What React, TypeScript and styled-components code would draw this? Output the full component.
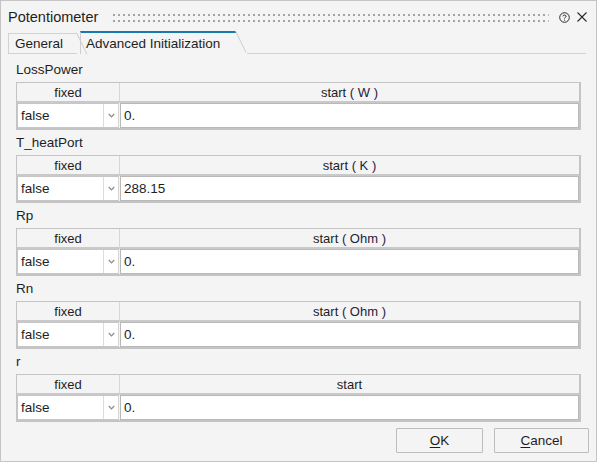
import React from 'react'
import styled, { createGlobalStyle } from 'styled-components'

const GlobalStyle = createGlobalStyle`
    html, body {
        margin: 0;
        padding: 0;
        background: #f4f4f4;
    }
    body {
        font-family: "Liberation Sans", Arial, sans-serif;
        font-size: 13px;
        color: #1e1e1e;
    }
    * {
        box-sizing: border-box;
    }
`

const Window = styled.div`
    display: flex;
    flex-direction: column;
    width: 597px;
    height: 462px;
    border: 1px solid #c4c4c4;
    background: #f4f4f4;
    overflow: hidden;

    & > * {
        flex-shrink: 0;
    }
`

const TitleBar = styled.div`
    display: flex;
    align-items: center;
    height: 30px;
    padding: 2px 9px 0 7px;
`

const Title = styled.span`
    font-size: 14.5px;
    color: #1f1f1f;
`

const Grip = styled.svg`
    flex: 1;
    height: 8px;
    margin: 1px 10px 0 15px;
`

const TitleIcons = styled.div`
    display: flex;
    align-items: center;
    gap: 7px;
`

const TabBar = styled.div`
    display: flex;
    align-items: flex-end;
    height: 23px;
    padding-left: 7px;
    padding-right: 10px;
`

const Tab = styled.div<{ $active?: boolean }>`
    position: relative;
    height: ${p => (p.$active ? 23 : 21)}px;
    padding: ${p => (p.$active ? '3px 16px 0 5px' : '2px 14px 0 6px')};
    margin-right: ${p => (p.$active ? 0 : 3)}px;
    border-left: 1px solid ${p => (p.$active ? '#cfcfcf' : '#d2d2d2')};
    border-top: ${p => (p.$active ? '2px solid #1779ac' : '1px solid #d2d2d2')};
    border-bottom: ${p => (p.$active ? 'none' : '1px solid #d2d2d2')};
    color: #1e1e1e;
    font-size: 13.5px;
    white-space: nowrap;

    &::after {
        content: '';
        position: absolute;
        top: ${p => (p.$active ? -2 : -1)}px;
        right: 0;
        width: 1px;
        height: 24px;
        background: #cfcfcf;
        transform-origin: top left;
        transform: rotate(-26deg);
    }
`

const TabRest = styled.div`
    flex: 1;
    margin-left: 11px;
    border-bottom: 1px solid #d2d2d2;
`

const Panel = styled.div`
    display: flex;
    flex-direction: column;
    padding: 3px 15px 0 15px;
`

const Section = styled.div`
    display: flex;
    flex-direction: column;
`

const Label = styled.div`
    height: 25px;
    line-height: 25px;
    font-size: 13.5px;
`

const Table = styled.div`
    display: grid;
    grid-template-columns: 103px 1fr;
    grid-template-rows: 20px 25px;
    border: 1px solid #c4c4c4;
    border-right-width: 2px;
    border-bottom-width: 2px;
`

const HeadCell = styled.div<{ $last?: boolean }>`
    display: flex;
    align-items: center;
    justify-content: center;
    border-right: ${p => (p.$last ? 'none' : '1px solid #d6d6d6')};
    border-bottom: 2px solid #c9c9c9;
    font-size: 13px;
`

const SelectCell = styled.div`
    display: flex;
    align-items: stretch;
    margin: 0 1px 0 0;
    background: #fff;
    border: 1px solid #c6c6c6;
    border-right: 1px solid #d6d6d6;
`

const SelectValue = styled.div`
    flex: 1;
    display: flex;
    align-items: center;
    padding-left: 3px;
    font-size: 13.5px;
`

const SelectArrow = styled.div`
    display: flex;
    align-items: center;
    justify-content: center;
    width: 15px;
    border-left: 1px solid #dcdcdc;
`

const InputCell = styled.div`
    display: flex;
    align-items: center;
    padding-left: 3px;
    background: #fff;
    border: 1px solid #b9b9b9;
    font-size: 13.5px;
`

const Footer = styled.div`
    display: flex;
    justify-content: flex-end;
    gap: 11px;
    margin-top: auto;
    padding: 0 7px 8px 0;
`

const Button = styled.button<{ $width: number }>`
    width: ${p => p.$width}px;
    height: 25px;
    background: #f4f4f4;
    border: 1px solid #bcbcbc;
    border-radius: 1px;
    font-family: "Liberation Sans", Arial, sans-serif;
    font-size: 13.5px;
    color: #1e1e1e;
    padding: 0;

    u {
        text-decoration-thickness: 1px;
        text-underline-offset: 2px;
    }
`

const Unit = styled.span`
    color: #1d2340;
`

type Param = {
    name: string
    unit?: string
    start: string
}

const params: Param[] = [
    { name: 'LossPower', unit: 'W', start: '0.' },
    { name: 'T_heatPort', unit: 'K', start: '288.15' },
    { name: 'Rp', unit: 'Ohm', start: '0.' },
    { name: 'Rn', unit: 'Ohm', start: '0.' },
    { name: 'r', start: '0.' },
]

// two rows of small square dots used as the drag handle
function DragGrip() {
    return (
        <Grip>
            <defs>
                <pattern id="grip-dots" width="5" height="6" patternUnits="userSpaceOnUse">
                    <rect x="0" y="0" width="2" height="2" fill="#a3a3a3" />
                </pattern>
            </defs>
            <rect x="0" y="0" width="100%" height="8" fill="url(#grip-dots)" />
        </Grip>
    )
}

function HelpIcon() {
    return (
        <svg width="11" height="11" viewBox="0 0 11 11">
            <circle cx="5.5" cy="5.5" r="4.8" fill="none" stroke="#2a2a2a" strokeWidth="1" />
            <path d="M3.9 4.3 C3.9 2.6 7.1 2.6 7.1 4.3 C7.1 5.4 5.5 5.3 5.5 6.5" fill="none" stroke="#2a2a2a" strokeWidth="1" />
            <rect x="5" y="7.6" width="1" height="1" fill="#2a2a2a" />
        </svg>
    )
}

function CloseIcon() {
    return (
        <svg width="10" height="10" viewBox="0 0 10 10">
            <path d="M0.5 0.5 L9.5 9.5 M9.5 0.5 L0.5 9.5" stroke="#2a2a2a" strokeWidth="1.1" />
        </svg>
    )
}

function Chevron() {
    return (
        <svg width="7" height="5" viewBox="0 0 7 5">
            <path d="M0.8 1 L3.5 3.8 L6.2 1" fill="none" stroke="#8a8a8a" strokeWidth="1.2" />
        </svg>
    )
}

function ParamTable({ param }: { param: Param }) {
    return (
        <Section>
            <Label>{param.name}</Label>
            <Table>
                <HeadCell>fixed</HeadCell>
                <HeadCell $last>
                    start
                    {param.unit && <Unit>&nbsp;( {param.unit} )</Unit>}
                </HeadCell>
                <SelectCell>
                    <SelectValue>false</SelectValue>
                    <SelectArrow>
                        <Chevron />
                    </SelectArrow>
                </SelectCell>
                <InputCell>{param.start}</InputCell>
            </Table>
        </Section>
    )
}

export default function App() {
    return (
        <>
            <GlobalStyle />
            <Window>
                <TitleBar>
                    <Title>Potentiometer</Title>
                    <DragGrip />
                    <TitleIcons>
                        <HelpIcon />
                        <CloseIcon />
                    </TitleIcons>
                </TitleBar>
                <TabBar>
                    <Tab>General</Tab>
                    <Tab $active>Advanced Initialization</Tab>
                    <TabRest />
                </TabBar>
                <Panel>
                    {params.map(p => (
                        <ParamTable key={p.name} param={p} />
                    ))}
                </Panel>
                <Footer>
                    <Button $width={87}>
                        <u>O</u>K
                    </Button>
                    <Button $width={95}>
                        <u>C</u>ancel
                    </Button>
                </Footer>
            </Window>
        </>
    )
}
